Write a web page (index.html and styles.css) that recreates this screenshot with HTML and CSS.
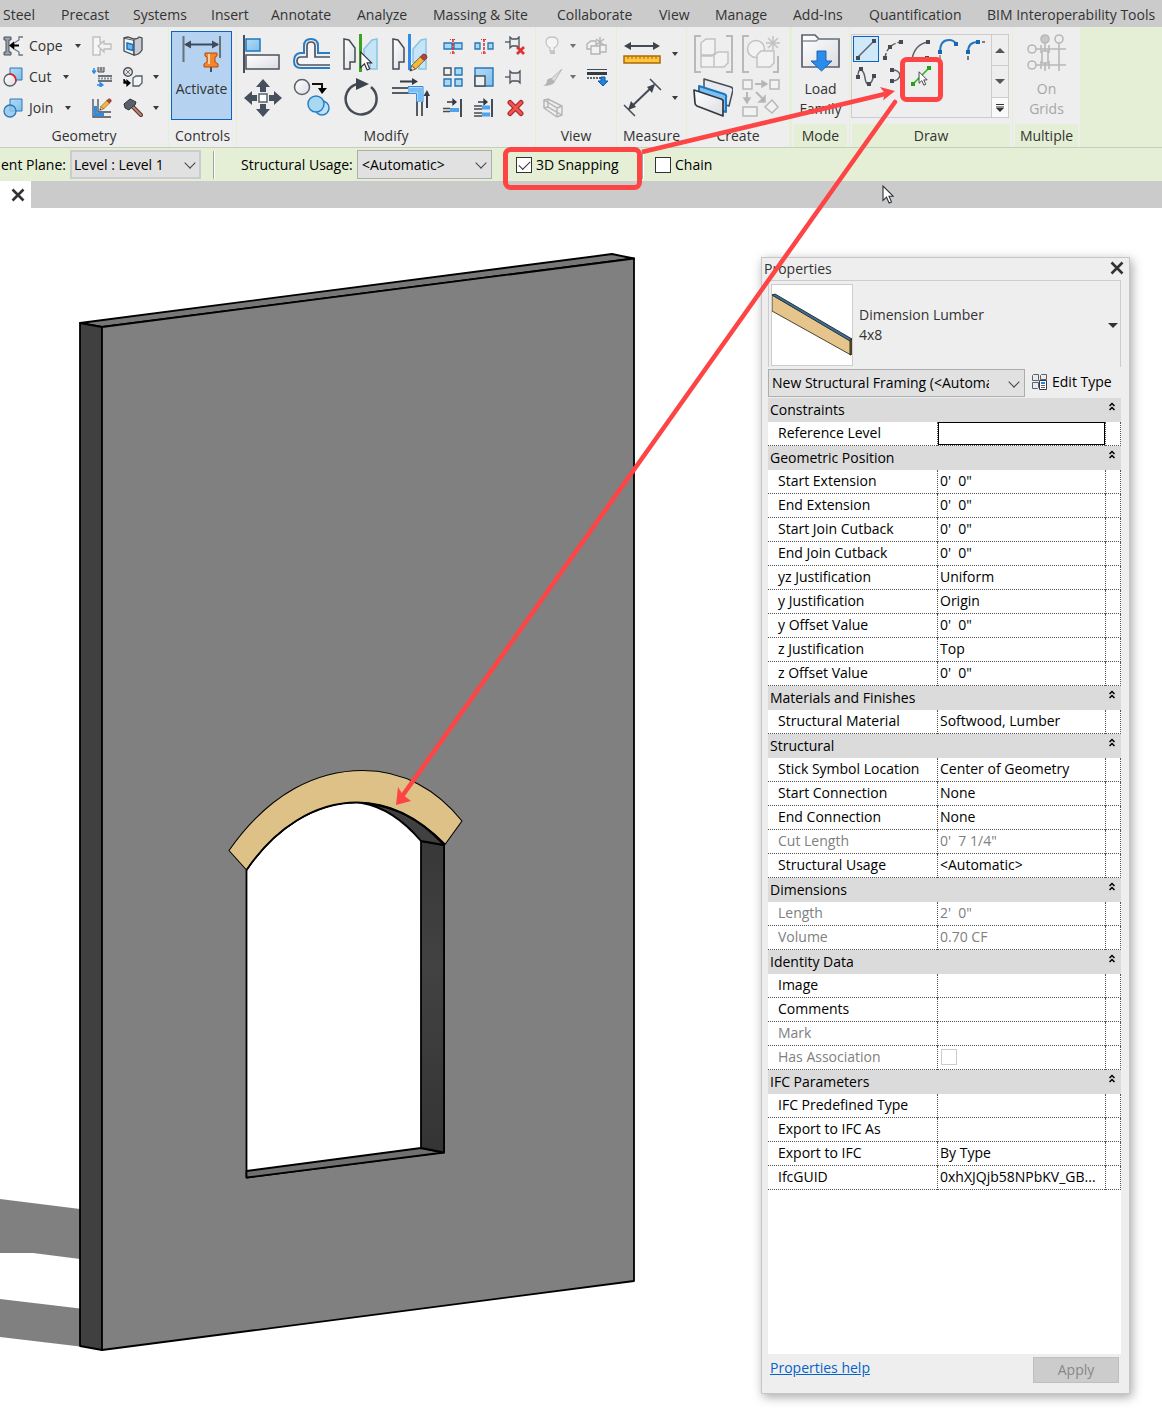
FILE: index.html
```html
<!DOCTYPE html>
<html lang="en">
<head>
<meta charset="utf-8">
<meta name="viewport" content="width=device-width, initial-scale=1">
<title>Modify | Place Beam</title>
<link rel="stylesheet" href="styles.css">
</head>
<body>
<svg class="defs" width="0" height="0" aria-hidden="true">
  <defs>
    <linearGradient id="blue" x1="0" y1="0" x2="1" y2="1"><stop offset="0" stop-color="#b4dcf4"/><stop offset="1" stop-color="#7fbfea"/></linearGradient>
    <linearGradient id="pale" x1="0" y1="0" x2="1" y2="1"><stop offset="0" stop-color="#ffffff"/><stop offset="1" stop-color="#dcdde2"/></linearGradient>
    <linearGradient id="reveal" x1="0" y1="0" x2="0" y2="1"><stop offset="0" stop-color="#383838"/><stop offset=".4" stop-color="#424242"/><stop offset="1" stop-color="#343434"/></linearGradient>
    <symbol id="caret" viewBox="0 0 6 4"><path d="M0 0h6L3 4z" fill="#3c3c3c"/></symbol>
    <symbol id="collapse" viewBox="0 0 8 9"><path d="M1.500 4 4 1.500 6.500 4M1.500 8 4 5.500 6.500 8" fill="none" stroke="#000" stroke-width="1.500"/></symbol>
    <symbol id="cross" viewBox="0 0 14 14"><path d="M1.500 1.500l11 11M12.500 1.500l-11 11" stroke="#333" stroke-width="2.600" fill="none"/></symbol>
    <symbol id="pencil" viewBox="0 0 20 20"><path d="M1 19l2-6 4 4z" fill="#e8d7b8" stroke="#444" stroke-width=".8"/><path d="M3 13 12 4l4 4-9 9z" fill="#f6b836" stroke="#5a4520" stroke-width=".8"/><path d="M12 4l3-3q4 0 4 4l-3 3z" fill="#b9433c" stroke="#603030" stroke-width=".8"/><path d="M1 19l1-2.500 1.500 1.500z" fill="#222"/></symbol>
    <symbol id="pointer" viewBox="0 0 12 19"><path d="M1 1v14.500l3.500-3.300 2.600 5.800 2.400-1.100L7 11.300h4.300z" fill="#fff" stroke="#2e3338" stroke-width="1.100"/></symbol>
  </defs>
</svg>

<nav class="tabs" aria-label="Ribbon tabs">
  <a href="#">Steel</a><a href="#">Precast</a><a href="#">Systems</a><a href="#">Insert</a><a href="#">Annotate</a><a href="#">Analyze</a><a href="#">Massing &amp; Site</a><a href="#">Collaborate</a><a href="#">View</a><a href="#">Manage</a><a href="#">Add-Ins</a><a href="#">Quantification</a><a href="#">BIM Interoperability Tools</a>
</nav>

<div class="ribbon">
  <section class="group geometry">
    <div class="tools">
      <button class="tool"><svg width="20" height="20"><path d="M1 1h7v3H6v12h2v3H1v-3h2V4H1z" fill="#9aa1aa" stroke="#4a515a"/><path d="M20 1h-4v3l-5 3v6l5 3v3h4" fill="#eef0f2" stroke="#6f7680" stroke-width="1.300"/><path d="M16 9.500H8" stroke="#000" stroke-width="2"/><path d="M6 9.500 11 5.500v8z"/></svg><span>Cope</span><svg class="caret" width="6" height="4"><use href="#caret"/></svg></button>
      <button class="tool" aria-label="Cope remove"><svg width="20" height="20"><path d="M1 1h7v5l3 1v6l-3 1v5H1z" fill="#f6f6f6" stroke="#c2c2c2" stroke-width="1.500"/><path d="M6 10l6-5v3h7v5h-7v3z" fill="#f2f2f2" stroke="#bdbdbd" stroke-width="1.300"/></svg></button>
      <button class="tool" aria-label="Wall opening"><svg width="20" height="20"><path d="M1 2l10 2v15L1 15z" fill="#f4f5f7" stroke="#454c56" stroke-width="1.300"/><path d="M1 2l4-1 6 2q4 0 5-2l3 1v12q-3 5-8 5V4" fill="#c9ccd2" stroke="#454c56" stroke-width="1.300"/><path d="M4 7l6 1.500v6L4 13z" fill="#6cb6ee" stroke="#1d6fc0" stroke-width="1.500"/></svg></button>
      <button class="tool"><svg width="20" height="20"><path d="M7 1h12v12H7z" fill="url(#blue)" stroke="#2b78b8"/><circle cx="7" cy="13" r="6" fill="url(#pale)" stroke="#555c66" stroke-width="1.300"/><path d="M6 7q7 0 7 8" fill="none" stroke="#f02020" stroke-width="1.600"/></svg><span>Cut</span><svg class="caret" width="6" height="4"><use href="#caret"/></svg></button>
      <button class="tool" aria-label="Beam joins"><svg width="20" height="20"><path d="M2 1v4M0 3.500 2 6l2-2.500" fill="none" stroke="#2d8cea" stroke-width="1.500"/><path d="M6 0v5h6V0M9 0v4" fill="#bbb" stroke="#444b55"/><path d="M6 9h14M6 14h14" stroke="#444b55" stroke-width="1.500"/><path d="M6 11.500h14" stroke="#8b919b" stroke-width="2" stroke-dasharray="2 1"/><path d="M5 18h5M8 15.500l3 2.500-3 2z" fill="#2d8cea" stroke="#2d8cea" stroke-width="1.300"/></svg></button>
      <button class="tool" aria-label="Paint"><svg width="20" height="20"><circle cx="5" cy="5" r="4.300" fill="#e4e6e9" stroke="#4b525b" stroke-width="1.400"/><path d="M2 2l6 6M8 2 2 8" stroke="#777"/><path d="M1 12v4h4M4 13.500 7 16l-3 2.500z" fill="#000" stroke="#000" stroke-width="1.300"/><path d="M10 11l3-2h6v7l-3 3h-6z" fill="#f3f4f6" stroke="#555c66" stroke-width="1.300"/></svg><svg class="caret far" width="6" height="4"><use href="#caret"/></svg></button>
      <button class="tool"><svg width="20" height="20"><path d="M7 1h12v12H7z" fill="url(#blue)" stroke="#2b78b8"/><circle cx="7" cy="13" r="6" fill="#8cc6ee" fill-opacity=".8" stroke="#2b78b8" stroke-width="1.300"/></svg><span>Join</span><svg class="caret" width="6" height="4"><use href="#caret"/></svg></button>
      <button class="tool" aria-label="Wall joins"><svg width="20" height="20"><path d="M1 1v18h18M6 1v13h13" fill="none" stroke="#454c56" stroke-width="1.300"/><path d="M3.500 8v8.500H12" fill="none" stroke="#2d8cea" stroke-width="3"/><use href="#pencil" x="7" y="0" width="13" height="13"/></svg></button>
      <button class="tool" aria-label="Demolish"><svg width="20" height="20"><path d="M9 8l9 9" stroke="#5f3328" stroke-width="4" stroke-linecap="round"/><path d="M9 8l9 9" stroke="#b98579" stroke-width="2" stroke-linecap="round"/><path d="M1 6l6-5 6 3-1 3-2 1-4 4-4-2z" fill="#5a6069" stroke="#30353b"/></svg><svg class="caret far" width="6" height="4"><use href="#caret"/></svg></button>
    </div>
    <h2>Geometry</h2>
  </section>

  <section class="group controls">
    <div class="tools">
      <button class="activate"><svg width="40" height="40"><path d="M1.500 2v26M38 2v22" stroke="#6a717b" stroke-width="2"/><path d="M4 10.500h32" stroke="#3c4a5c" stroke-width="2"/><path d="M2 10.500l7-4v8zM37 10.500l-7-4v8z" fill="#3c4a5c"/><path d="M29 30v8" stroke="#4b525b" stroke-width="2"/><path d="M23 19h12v3l-2 1v5l3 2v3H22v-3l3-2v-5l-2-1z" fill="#f5862c" stroke="#b34b12"/><path d="M27 20v10" stroke="#ffd0a0" stroke-width="2"/></svg><span>Activate</span></button>
    </div>
    <h2>Controls</h2>
  </section>

  <section class="group modify">
    <div class="tools">
      <div class="large">
        <button aria-label="Align"><svg width="40" height="40"><path d="M1 1v38" stroke="#4a515a" stroke-width="2"/><path d="M3 5h14v12H3z" fill="url(#blue)" stroke="#1e78be" stroke-width="1.500"/><path d="M3 21h33v14H3z" fill="url(#pale)" stroke="#4a515a" stroke-width="1.500"/></svg></button>
        <button aria-label="Offset"><svg width="40" height="40"><path d="M38 19H26V12q0-7-7-7t-7 7v7H8q-6 1-6 8 0 7 7 7h29" fill="none" stroke="#2a7fc4" stroke-width="2"/><path d="M38 23H23V12q0-4-4-4t-4 4v11H9q-4 0-4 4t4 4h29" fill="#f5f5f7" stroke="#4f5660" stroke-width="1.700"/></svg></button>
        <button aria-label="Mirror, pick axis"><svg width="40" height="40"><path d="M3 5l5 1 6 8v14H9v7H3z" fill="url(#pale)" stroke="#454c56" stroke-width="1.500"/><path d="M36 5l-5 1-8 9v13h6v7h7z" fill="#c5e4f5" stroke="#8bc3e4" stroke-width="1.500"/><path d="M19.500 0v38" stroke="#37a31e" stroke-width="3"/><use href="#pointer" x="18" y="17" width="14" height="20"/></svg></button>
        <button aria-label="Mirror, draw axis"><svg width="40" height="40"><path d="M3 5l5 1 6 8v14H9v7H3z" fill="url(#pale)" stroke="#454c56" stroke-width="1.500"/><path d="M36 5l-5 1-8 9v13h6v7h7z" fill="#c5e4f5" stroke="#8bc3e4" stroke-width="1.500"/><path d="M19.500 0v36" stroke="#2d8cea" stroke-width="3"/><use href="#pencil" x="19" y="19" width="19" height="19"/></svg></button>
        <button aria-label="Move"><svg width="40" height="40"><path d="M16 16h8v8h-8z" fill="#fff" stroke="#59616b" stroke-width="1.500"/><path d="M20 1l7 8h-4v5h-6V9h-4zM20 39l-7-8h4v-5h6v5h4zM1 20l8-7v4h5v6H9v4zM39 20l-8 7v-4h-5v-6h5v-4z" fill="#46505c"/></svg></button>
        <button aria-label="Copy"><svg width="40" height="40"><circle cx="10" cy="9" r="7.500" fill="url(#pale)" stroke="#5a616b" stroke-width="1.500"/><path d="M20 6h10v6" fill="none" stroke="#111" stroke-width="2"/><path d="M26 10h9l-5 6z"/><circle cx="30" cy="30" r="7" fill="#bfe2f6" stroke="#2a7fc4" stroke-width="1.500"/><circle cx="24" cy="26" r="8" fill="#a9d8f3" stroke="#2a7fc4" stroke-width="1.500"/></svg></button>
        <button aria-label="Rotate"><svg width="40" height="40"><path d="M30 9a15.500 15.500 0 1 1-14-3" fill="none" stroke="#454c56" stroke-width="2.500"/><path d="M15 0l13 6-13 6z" fill="#3c444e"/></svg></button>
        <button aria-label="Trim to corner"><svg width="40" height="40"><path d="M2 10h17M2 15h17M27 23v15M32 23v15" stroke="#555c66" stroke-width="2"/><path d="M18 8.500h15V24M18 15.500h8.500V24" fill="none" stroke="#2d8cea"/><path d="M18 12h12v12" fill="none" stroke="#79bdf3" stroke-width="5"/><path d="M10 3.500h14M37 30V16" stroke="#333b44" stroke-width="2"/><path d="M22 0l6 3.500L22 7zM33.500 18l3.500-6 3 6z" fill="#333b44"/></svg></button>
      </div>
      <div class="small">
        <button aria-label="Split element"><svg width="20" height="20"><path d="M1 7h8v6H1zM11 7h8v6h-8z" fill="#a9d8f3" stroke="#2477b8" stroke-width="1.300"/><path d="M10 3v15" stroke="#e02424" stroke-width="1.500" stroke-dasharray="3 1"/><path d="M7 3.500h6M7 17h6" stroke="#e02424" stroke-dasharray="1 1"/></svg></button>
        <button aria-label="Split with gap"><svg width="20" height="20"><path d="M1 7h5v6H1zM14 7h5v6h-5z" fill="#a9d8f3" stroke="#2477b8" stroke-width="1.300"/><path d="M10 3v15" stroke="#e02424" stroke-width="1.500" stroke-dasharray="3 1"/><path d="M7 3.500h6M7 17h6" stroke="#e02424" stroke-dasharray="1 1"/></svg></button>
        <button aria-label="Unpin"><svg width="20" height="20"><path d="M0 6h5" stroke="#4b525b" stroke-width="1.300"/><path d="M5 1v11l2-2h5l2 2V1l-2 2H7z" fill="#eceef0" stroke="#4b525b" stroke-width="1.300"/><path d="M12 11l7 7M19 11l-7 7" stroke="#d33" stroke-width="2.800"/></svg></button>
        <button aria-label="Array"><svg width="20" height="20" stroke-width="1.400"><path d="M1 1h7v7H1z" fill="#eef0f2" stroke="#454c56"/><path d="M12 1h7v7h-7zM1 12h7v7H1zM12 12h7v7h-7z" fill="#a9d8f3" stroke="#2477b8"/></svg></button>
        <button aria-label="Scale"><svg width="20" height="20" stroke-width="1.400"><path d="M1 1h18v18H1z" fill="url(#blue)" stroke="#2477b8"/><path d="M1 9h10v10H1z" fill="#eef0f2" stroke="#454c56"/></svg></button>
        <button aria-label="Pin"><svg width="20" height="20" fill="none" stroke="#4b525b" stroke-width="1.300"><path d="M0 10h5"/><path d="M5 4v12l2-2h6l2 2V4l-2 2H7z" fill="#e8eaed"/></svg></button>
        <button aria-label="Extend single"><svg width="20" height="20"><path d="M4 4h8M10 1.500l3 2.500-3 2.500z" fill="#333" stroke="#333b44" stroke-width="1.300"/><path d="M0 10.500h7M0 13.500h7" stroke="#454c56" stroke-width="1.500"/><path d="M7 12h9" stroke="#4ca3ee" stroke-width="4"/><path d="M18 1v18" stroke="#454c56" stroke-width="2"/></svg></button>
        <button aria-label="Extend multiple"><svg width="20" height="20"><path d="M4 4h8M10 1.500l3 2.500-3 2.500z" fill="#333" stroke="#333b44" stroke-width="1.300"/><path d="M0 8h8M0 11h8M0 15h8M0 18h8" stroke="#454c56" stroke-width="1.400"/><path d="M8 9.500h8M8 16.500h8" stroke="#4ca3ee" stroke-width="4"/><path d="M18 1v18" stroke="#454c56" stroke-width="2"/></svg></button>
        <button aria-label="Delete"><svg width="20" height="20"><path d="M5 4.500l11 11M16 4.500l-11 11" stroke="#a82525" stroke-width="5" stroke-linecap="round"/><path d="M5 4.500l11 11M16 4.500l-11 11" stroke="#ef5350" stroke-width="3" stroke-linecap="round"/></svg></button>
      </div>
    </div>
    <h2>Modify</h2>
  </section>

  <section class="group view">
    <div class="tools">
      <button class="tool" aria-label="Hide"><svg width="20" height="20"><path d="M7 15v-3Q3 10 3 6q0-5 6-5t6 5q0 4-4 6v3z" fill="#f4f4f4" stroke="#c4c4c4" stroke-width="1.300"/><path d="M7 15h5v3H7z" fill="#c4c4c4"/></svg><svg class="caret" width="6" height="4"><use href="#caret"/></svg></button>
      <button class="tool" aria-label="Displace"><svg width="22" height="20" fill="#f2f2f2" stroke="#b4b4b4" stroke-width="1.400"><path d="M1 8l4-3h5v8H1z"/><path d="M5 10h9v8H5z"/><path d="M14 9h6v7h-6z"/><path d="M14 1v9M10 3l8 6M18 3l-8 6"/></svg></button>
      <button class="tool" aria-label="Override"><svg width="20" height="20"><path d="M19 2 8 12l3 3z" fill="#ddd" stroke="#b9b9b9"/><path d="M8 11l4 4q-3 4-12 4 4-2 4-6 2-2 4-2z" fill="#b4b4b4"/></svg><svg class="caret" width="6" height="4"><use href="#caret"/></svg></button>
      <button class="tool" aria-label="Linework"><svg width="22" height="20"><path d="M1 2.500h20" stroke="#454c56"/><path d="M1 6.500h20" stroke="#333b44" stroke-width="3"/><path d="M1 11h14" stroke="#333b44" stroke-width="1.500" stroke-dasharray="2 1"/><path d="M15 10h4v4h3l-5 5-5-5h3z" fill="#2383e2" stroke="#1358a4"/></svg></button>
      <button class="tool" aria-label="Selection box"><svg width="20" height="20" fill="#eee" stroke="#b4b4b4" stroke-width="1.400"><path d="M1 2l4-1 14 7v9l-5 2L1 10z"/><path d="M1 2l13 8v9M14 10l5-2M5 1v8l14 8M1 10l4-1" fill="none"/></svg></button>
    </div>
    <h2>View</h2>
  </section>

  <section class="group measure">
    <div class="tools">
      <button class="tool" aria-label="Measure"><svg width="40" height="40"><path d="M5 12h30" stroke="#454c56" stroke-width="2"/><path d="M2 12l7-4v8zM38 12l-7-4v8z" fill="#3c444e"/><path d="M2 22h36v7H2z" fill="#ffc63a" stroke="#a86a12" stroke-width="1.500"/><path d="M6 22v3M10 22v3M14 22v3M18 22v3M22 22v3M26 22v3M30 22v3M34 22v3" stroke="#a86a12"/></svg><svg class="caret" width="6" height="4"><use href="#caret"/></svg></button>
      <button class="tool" aria-label="Aligned dimension"><svg width="40" height="40"><path d="M7 31 32 7" stroke="#454c56" stroke-width="2"/><path d="M2 27l11 11M28 1l11 11" stroke="#454c56" stroke-width="1.500"/><path d="M6 32l3-9 5 6zM33 6l-3 9-5-6z" fill="#3c444e"/></svg><svg class="caret" width="6" height="4"><use href="#caret"/></svg></button>
    </div>
    <h2>Measure</h2>
  </section>

  <section class="group create">
    <div class="tools">
      <button aria-label="Create group"><svg width="40" height="40" fill="#f2f2f2" stroke="#c2c2c2" stroke-width="1.500"><path d="M8 2H2v36h6M33 2h6v36h-6" fill="none" stroke="#b9b9b9" stroke-width="2"/><path d="M8 9l5-4h9v14l-3 3H8zM8 21h13v12H8zM21 21l4-3h10v11l-4 4H21z"/></svg></button>
      <button aria-label="Create similar"><svg width="40" height="40" fill="#f2f2f2" stroke="#c2c2c2" stroke-width="1.500"><path d="M8 2H2v36h6M32 38h5V22" fill="none" stroke="#b9b9b9" stroke-width="2"/><circle cx="15" cy="15" r="8.500"/><path d="M16 21l4-4h13v12l-4 4H16z"/><path d="M32 2v14M25 9h14M27 4l10 10M37 4 27 14"/></svg></button>
      <button aria-label="Create parts"><svg width="40" height="40" stroke-linejoin="round"><path d="M11 1l27 8q2 1 2 3l-4 16-25-8z" fill="#e8eaf0" stroke="#454c56" stroke-width="1.500"/><path d="M6 8l25 8q3 1 2 4v14L6 25z" fill="#7dc0f0" stroke="#1e78be" stroke-width="2"/><path d="M1 12l27 9q3 1 2 4v13L4 28q-2-1-2-3z" fill="url(#pale)" stroke="#323942" stroke-width="1.700"/></svg></button>
      <button aria-label="Create assembly"><svg width="40" height="40" fill="#f2f2f2" stroke="#b8b8b8" stroke-width="1.500"><path d="M2 2h9v9H2zM29 2h9v9h-9zM2 29h14v9H2zM31 22l6 7-6 6-7-6z"/><path d="M14 6h8M6 14v8M15 14l7 7" stroke-width="2"/><path d="M21 3l5 3-5 3zM3 20l3 5 3-5zM24 18v6h-6z" fill="#b0b0b0"/></svg></button>
    </div>
    <h2>Create</h2>
  </section>

  <section class="group mode context">
    <div class="tools">
      <button class="stack"><svg width="40" height="40"><path d="M1 2h13l4 4h20v28H1z" fill="url(#pale)" stroke="#59616b" stroke-width="1.700"/><path d="M2 8h13l3-2h20" fill="none" stroke="#8a919a" stroke-width="1.500"/><path d="M16 18h9v10h6L20.500 38 10 28h6z" fill="#2d8cea" stroke="#1b65b8"/></svg><span>Load</span><span>Family</span></button>
    </div>
    <h2>Mode</h2>
  </section>

  <section class="group draw context">
    <div class="tools">
      <div class="gallery">
        <div class="shapes">
          <button class="selected" aria-label="Line"><svg width="26" height="26"><path d="M5 21 21 5" stroke="#5a616b" stroke-width="1.500"/><path d="M3 20h4v4H3zM19 3h4v4h-4z" fill="#444b54"/></svg></button>
          <button aria-label="Start-end-radius arc"><svg width="26" height="26"><path d="M4 22Q6 8 20 6" fill="none" stroke="#5a616b" stroke-width="1.500" stroke-dasharray="5 2"/><path d="M2 20h4v4H2zM7 9h4v4H7zM18 4h4v4h-4z" fill="#444b54"/></svg></button>
          <button aria-label="Center-ends arc"><svg width="26" height="26"><path d="M3 23Q6 8 19 6" fill="none" stroke="#5a616b" stroke-width="1.500"/><path d="M17 4h4v4h-4zM16 20h4v4h-4z" fill="#444b54"/></svg></button>
          <button aria-label="Tangent arc"><svg width="26" height="26"><path d="M3 16Q3 4 12 4q5 0 7 4" fill="none" stroke="#2477c4" stroke-width="2"/><path d="M1 14h4v4H1zM17 6h4v4h-4z" fill="#1768b4"/><path d="M3 19v4" stroke="#555"/></svg></button>
          <button aria-label="Fillet arc"><svg width="26" height="26"><path d="M3 16Q3 6 13 6" fill="none" stroke="#2477c4" stroke-width="2"/><path d="M1 14h4v4H1zM11 4h4v4h-4z" fill="#1768b4"/><path d="M3 20v4M17 6h3" stroke="#555" stroke-width="1.500"/></svg></button>
          <button aria-label="Spline"><svg width="26" height="26"><path d="M5 13Q5 5 8 6t4 8 4 6 5-9" fill="none" stroke="#5a616b" stroke-width="1.500"/><path d="M3 11h4v4H3zM6 3h4v4H6zM14 18h4v4h-4zM19 10h4v4h-4z" fill="#444b54"/></svg></button>
          <button aria-label="Partial ellipse"><svg width="26" height="26"><path d="M11 6q7 0 8 5-1 6-8 6" fill="none" stroke="#5a616b" stroke-width="1.500"/><path d="M9 4h4v4H9zM9 15h4v4H9z" fill="#444b54"/></svg></button>
          <button aria-label="Pick lines"><svg width="26" height="26"><path d="M4 20 20 4" stroke="#2fb820" stroke-width="1.700"/><path d="M2 18h4v4H2zM18 2h4v4h-4z" fill="#21a413"/><use href="#pointer" x="9" y="7" width="10" height="15"/></svg></button>
        </div>
        <div class="scroller">
          <button aria-label="Up"><svg width="10" height="5"><path d="M0 5h10L5 0z" fill="#555"/></svg></button>
          <button aria-label="Down"><svg width="10" height="5"><path d="M0 0h10L5 5z" fill="#555"/></svg></button>
          <button aria-label="More"><svg width="8" height="8"><path d="M0 .5h8M0 3h8" stroke="#333"/><path d="M0 4h8L4 8z" fill="#333"/></svg></button>
        </div>
      </div>
    </div>
    <h2>Draw</h2>
  </section>

  <section class="group multiple context">
    <div class="tools">
      <button class="stack" disabled><svg width="40" height="40" fill="none" stroke="#b8b8b8" stroke-width="1.600"><circle cx="18" cy="6" r="4" fill="#c8c8c8"/><circle cx="32" cy="6" r="4"/><circle cx="5" cy="16" r="4"/><circle cx="5" cy="32" r="4"/><path d="M18 10v28M32 10v28M9 16h30M9 32h30M14 12v8M22 12v8M14 28v8M22 28v8"/><path d="M15 18h6v12h-6z" fill="#eee"/></svg><span>On</span><span>Grids</span></button>
    </div>
    <h2>Multiple</h2>
  </section>
</div>

<form class="options">
  <label for="plane">ent Plane:</label>
  <span class="pick plane"><select id="plane"><option>Level : Level 1</option></select></span>
  <i class="rule"></i>
  <label for="usage">Structural Usage:</label>
  <span class="pick usage"><select id="usage"><option>&lt;Automatic&gt;</option></select></span>
  <label class="check snap"><input type="checkbox" checked>3D Snapping</label>
  <i class="rule short"></i>
  <label class="check"><input type="checkbox">Chain</label>
</form>

<div class="view-tabs"><button aria-label="Close view"><svg width="14" height="14"><use href="#cross"/></svg></button></div>

<main class="canvas">
  <svg class="scene" width="636" height="1210" viewBox="0 208 636 1210" role="img" aria-label="Wall with arched opening and beam">
    <path d="M0 1199l80 10v50l-47-6H0zM0 1299l80 9.500v38L0 1337z" fill="#808080"/>
    <g stroke="#000" stroke-width="1.800" stroke-linejoin="round">
      <path d="M80 323 612 254l22 4.500L102 327z" fill="#777"/>
      <path d="M80 323l22 4v1023l-22-4z" fill="#404040"/>
      <path d="M102 327 634 258.500V1281L102 1350z" fill="#808080"/>
      <path d="M246.500 870C275 828 315 802 357 802c33 0 63 17 87 42.500V1152l-197.500 25.500z" fill="#fff"/>
      <path d="M246.500 1171 421 1148l23 4.500-197.500 25z" fill="#707070"/>
      <path d="M421 841l23 4v307.500l-23-4.500z" fill="url(#reveal)"/>
      <path d="M362 803c23 4 42 18 59 38l23 4c-24-26-48-39-82-42z" fill="#404040"/>
      <path d="M229 850.500C270 792 318 770.500 363 770.500c40 0 74 19 99 50.500l-17 23.500C420 819 390 802.500 357 802.500c-42 0-82 26-110.500 67.500z" fill="#dec186" stroke-width="1.100"/>
      <path d="M246.500 870C275 828 315 802.500 357 802.500c33 0 63 16.500 88 42" fill="none"/>
    </g>
  </svg>

  <aside class="panel" aria-label="Properties">
    <header><h1>Properties</h1><button aria-label="Close"><svg width="14" height="14"><use href="#cross"/></svg></button></header>
    <button class="type">
      <svg class="thumb" width="80" height="80"><path d="M0 10 79 55v15L0 26z" fill="#e5c58b" stroke="#4f432d"/><path d="M0 10l3-1 77 45-2 2z" fill="#3f6f96" stroke="#26323d"/><path d="M78 55l2-1v15l-2 1z" fill="#6b5838" stroke="#2e281c"/></svg>
      <span>Dimension Lumber<br>4x8</span>
      <svg class="more" width="10" height="5"><path d="M0 0h10L5 5z" fill="#333"/></svg>
    </button>
    <div class="filter">
      <span class="pick"><select aria-label="Instance filter"><option>New Structural Framing (&lt;Automatic&gt;)</option></select></span>
      <button class="edit"><svg width="17" height="17" fill="#e9ebee" stroke="#59616b"><path d="M1.500 2.500l1-1h5v6h-6zM9.500 2.500l1-1h5v5h-6zM1.500 9.500h6v5l-1 1h-5z"/><path d="M8.500 7.500h7v9h-7z" fill="#fff" stroke="#333b44"/><path d="M10 10h4" stroke="#2383e2" stroke-width="2"/><path d="M10 12.500h4M10 14.500h4"/></svg>Edit Type</button>
    </div>
    <div class="grid">
      <table>
        <colgroup><col class="name"><col><col class="extra"></colgroup>
        <tbody>
        <tr class="cat"><th colspan="2">Constraints</th><td><svg width="8" height="9"><use href="#collapse"/></svg></td></tr>
        <tr><th><label for="ref">Reference Level</label></th><td class="field"><input id="ref" type="text"></td><td></td></tr>
        <tr class="cat"><th colspan="2">Geometric Position</th><td><svg width="8" height="9"><use href="#collapse"/></svg></td></tr>
        <tr><th>Start Extension</th><td>0'  0"</td><td></td></tr>
        <tr><th>End Extension</th><td>0'  0"</td><td></td></tr>
        <tr><th>Start Join Cutback</th><td>0'  0"</td><td></td></tr>
        <tr><th>End Join Cutback</th><td>0'  0"</td><td></td></tr>
        <tr><th>yz Justification</th><td>Uniform</td><td></td></tr>
        <tr><th>y Justification</th><td>Origin</td><td></td></tr>
        <tr><th>y Offset Value</th><td>0'  0"</td><td></td></tr>
        <tr><th>z Justification</th><td>Top</td><td></td></tr>
        <tr><th>z Offset Value</th><td>0'  0"</td><td></td></tr>
        <tr class="cat"><th colspan="2">Materials and Finishes</th><td><svg width="8" height="9"><use href="#collapse"/></svg></td></tr>
        <tr><th>Structural Material</th><td>Softwood, Lumber</td><td></td></tr>
        <tr class="cat"><th colspan="2">Structural</th><td><svg width="8" height="9"><use href="#collapse"/></svg></td></tr>
        <tr><th>Stick Symbol Location</th><td>Center of Geometry</td><td></td></tr>
        <tr><th>Start Connection</th><td>None</td><td></td></tr>
        <tr><th>End Connection</th><td>None</td><td></td></tr>
        <tr class="off"><th>Cut Length</th><td>0'  7 1/4"</td><td></td></tr>
        <tr><th>Structural Usage</th><td>&lt;Automatic&gt;</td><td></td></tr>
        <tr class="cat"><th colspan="2">Dimensions</th><td><svg width="8" height="9"><use href="#collapse"/></svg></td></tr>
        <tr class="off"><th>Length</th><td>2'  0"</td><td></td></tr>
        <tr class="off"><th>Volume</th><td>0.70 CF</td><td></td></tr>
        <tr class="cat"><th colspan="2">Identity Data</th><td><svg width="8" height="9"><use href="#collapse"/></svg></td></tr>
        <tr><th>Image</th><td></td><td></td></tr>
        <tr><th>Comments</th><td></td><td></td></tr>
        <tr class="off"><th>Mark</th><td></td><td></td></tr>
        <tr class="off"><th><label for="assoc">Has Association</label></th><td><input id="assoc" type="checkbox" disabled></td><td></td></tr>
        <tr class="cat"><th colspan="2">IFC Parameters</th><td><svg width="8" height="9"><use href="#collapse"/></svg></td></tr>
        <tr><th>IFC Predefined Type</th><td></td><td></td></tr>
        <tr><th>Export to IFC As</th><td></td><td></td></tr>
        <tr><th>Export to IFC</th><td>By Type</td><td></td></tr>
        <tr><th>IfcGUID</th><td>0xhXJQjb58NPbKV_GB...</td><td></td></tr>
        </tbody>
      </table>
    </div>
    <footer><a href="#">Properties help</a><button disabled>Apply</button></footer>
  </aside>
</main>

<svg class="markup" width="1162" height="1418" aria-hidden="true">
  <g fill="none" stroke="#fd4545" stroke-width="5">
    <rect x="505.500" y="149.500" width="134" height="38" rx="5"/>
    <rect x="902.500" y="59.500" width="38" height="40" rx="4"/>
    <path d="M642 152 885 94" stroke-width="4.500"/>
    <path d="M895 102 403 795" stroke-width="4.500" stroke-linecap="round"/>
  </g>
  <path d="M895 91l-15-4 5 6.500-2 7zM396 805l2-18 5 8 8 6z" fill="#fd4545"/>
  <use href="#pointer" x="882" y="185" width="12" height="19"/>
</svg>
</body>
</html>
```
FILE: styles.css
```css
* { box-sizing: border-box; }

body {
  margin: 0;
  min-height: 100vh;
  display: flex;
  flex-direction: column;
  position: relative;
  background: #fff;
  color: #000;
  font: 14px/20px "Open Sans", "Noto Sans", sans-serif;
  overflow-x: hidden;
}

button, select, input { font: inherit; color: inherit; margin: 0; }
button { background: none; border: 0; padding: 0; text-align: left; }
svg { display: block; flex: none; }
.defs { position: absolute; }

/* Ribbon tabs */
.tabs {
  display: grid;
  grid-template-columns: 58px 72px 78px 60px 86px 76px 124px 102px 56px 78px 76px 118px 1fr;
  height: 27px;
  padding: 5px 0 0 3px;
  background: #cbcbcb;
  white-space: nowrap;
}
.tabs a { color: #333; text-decoration: none; }

/* Ribbon */
.ribbon {
  display: flex;
  gap: 1px;
  background: #e4efd5;
  border-bottom: 1px solid #c6cdbd;
  color: #333;
}
.group {
  display: flex;
  flex-direction: column;
  flex: none;
  background: #eee;
}
.group .tools { height: 97px; padding-top: 3px; }
.group h2 {
  height: 23px;
  margin: 0;
  font: inherit;
  line-height: 24px;
  text-align: center;
}
.context h2 { background: #e4efd5; margin: 0 2px; }
.tool { display: flex; align-items: center; }

.geometry { width: 168px; }
.geometry .tools {
  display: grid;
  grid-template: repeat(3, 31px) / 89px 31px 1fr;
  padding-left: 3px;
}
.geometry .tool { gap: 6px; }
.geometry .caret { margin-left: 6px; }
.geometry .caret.far { margin-left: 4px; }

.controls { width: 67px; }
.controls .tools { padding: 4px 4px 0 2px; }
.activate {
  width: 61px;
  height: 89px;
  background: #b5d3f0;
  border: 1px solid #0a64c0;
  display: flex;
  flex-direction: column;
  align-items: center;
  padding-top: 2px;
  gap: 5px;
}

.modify { width: 298px; }
.modify .tools { display: flex; padding-left: 6px; }
.large {
  display: grid;
  grid-template: repeat(2, 44px) / repeat(4, 49px);
  padding-top: 2px;
}
.small {
  display: grid;
  grid-template: repeat(3, 31px) / repeat(3, 31px);
  align-items: center;
  padding-left: 4px;
}

.view { width: 80px; }
.view .tools {
  display: grid;
  grid-template: repeat(3, 31px) / 43px 22px;
  padding-left: 7px;
}
.view .caret { margin-left: 7px; opacity: .7; }

.measure { width: 69px; }
.measure .tools {
  display: grid;
  grid-template-rows: repeat(2, 44px);
  padding: 5px 0 0 5px;
}
.measure .caret { margin-left: 10px; }

.create { width: 102px; }
.create .tools {
  display: grid;
  grid-template: repeat(2, 44px) / repeat(2, 48px);
  padding: 5px 0 0 6px;
}

.mode { width: 57px; margin-left: 2px; }
.stack {
  display: flex;
  flex-direction: column;
  align-items: center;
  width: 100%;
  padding-top: 3px;
}
.stack span { text-align: center; }
.stack svg { margin-bottom: 6px; }
.stack:disabled { color: #a6a6a6; }

.draw { width: 162px; }
.draw .tools { padding: 7px 3px 0 1px; }
.gallery {
  display: flex;
  justify-content: space-between;
  height: 84px;
  border: 1px solid #ccc;
}
.shapes {
  display: grid;
  grid-template: repeat(2, 28px) / 28px 28px 28px 28px 26px;
  padding: 1px 0 0 1px;
}
.shapes button { width: 26px; height: 26px; }
.shapes .selected { background: #cfe8fa; outline: 1px solid #0a64c0; outline-offset: -1px; }
.scroller { display: grid; grid-template-rows: 31px 32px 1fr; width: 17px; }
.scroller button {
  display: grid;
  place-items: center;
  border-left: 1px solid #ccc;
  border-bottom: 1px solid #ccc;
}
.scroller button:last-child { background: #fafafa; border-bottom: 0; }

.multiple { width: 67px; }

/* Options bar */
.options {
  display: flex;
  align-items: center;
  height: 33px;
  padding-left: 1px;
  background: #e4efd5;
}
.options > label { line-height: 22px; padding-top: 1px; }
.options > label[for="plane"] { width: 69px; }
.options > label[for="usage"] { width: 116px; }
.pick { position: relative; display: block; }
.pick select {
  appearance: none;
  display: block;
  width: 100%;
  height: 29px;
  padding: 0 24px 0 4px;
  border: 1px solid #adadad;
  border-radius: 0;
  background: #e1e1e1;
  overflow: hidden;
}
.pick::after {
  content: "";
  position: absolute;
  right: 7px;
  top: 9px;
  width: 7px;
  height: 7px;
  border: solid #444;
  border-width: 0 1px 1px 0;
  transform: rotate(45deg);
}
.plane { width: 131px; }
.plane select { border: 2px solid #cbcbd0; padding-left: 2px; }
.usage { width: 135px; margin-right: 24px; }
.rule {
  width: 2px;
  height: 28px;
  margin: 0 26px 0 12px;
  background: #a5a5a5;
  border-right: 1px solid #fff;
}
.rule.short { margin: 0 11px 0 0; }
.check { display: flex; align-items: center; gap: 4px; }
.snap { width: 126px; }
input[type="checkbox"] {
  appearance: none;
  width: 16px;
  height: 16px;
  border: 1px solid #333;
  background: #fff;
  display: grid;
  place-items: center;
}
input[type="checkbox"]:checked::before {
  content: "";
  width: 10px;
  height: 5px;
  margin-bottom: 3px;
  border: solid #333;
  border-width: 0 0 1px 1px;
  transform: rotate(-45deg);
}
input[type="checkbox"]:disabled { border-color: #ccc; }

/* View tabs */
.view-tabs { height: 27px; background: #cbcbcb; }
.view-tabs button { width: 31px; height: 27px; padding-left: 11px; background: #fff; }

/* Drawing area */
.canvas { flex: 1; display: flex; align-items: flex-start; }

.panel {
  align-self: stretch;
  display: flex;
  flex-direction: column;
  width: 369px;
  margin: 49px 32px 24px auto;
  padding: 0 8px 10px 6px;
  background: #eee;
  border: 1px solid #c6c6c6;
  box-shadow: 2px 3px 10px rgba(0, 0, 0, .35);
}
.panel header {
  display: flex;
  justify-content: space-between;
  align-items: flex-start;
  height: 22px;
  margin: 0 -5px 0 -4px;
  color: #333;
}
.panel h1 { margin: 0; font: inherit; line-height: 22px; }
.panel header button { width: 16px; padding-top: 3px; }

.type {
  display: flex;
  align-items: center;
  height: 87px;
  margin-bottom: 2px;
  padding: 2px 2px 0 3px;
  border: 1px solid #ccc;
  border-bottom: 0;
  color: #333;
}
.type .thumb { width: 80px; height: 80px; background: #fff; outline: 1px solid #ccc; margin-right: 7px; }
.type .more { margin-left: auto; }

.filter { display: flex; height: 28px; gap: 6px; margin-bottom: 1px; }
.filter .pick { width: 257px; }
.filter select { height: 28px; padding: 0 35px 0 3px; }
.edit { display: flex; align-items: center; gap: 4px; padding-bottom: 3px; white-space: nowrap; }

.grid { flex: 1; background: #fff; }
table { width: 100%; border-collapse: separate; border-spacing: 0; table-layout: fixed; }
.name { width: 169px; }
.extra { width: 16px; }
tr { height: 24px; }
th, td {
  height: 24px;
  padding: 0 0 1px 2px;
  border-bottom: 1px dotted #555;
  border-left: 1px dotted #555;
  font-weight: normal;
  line-height: 22px;
  text-align: left;
  white-space: pre;
}
th { padding-left: 10px; border-left: 0; }
td:last-child { border-right: 1px dotted #555; }
.cat th, .cat td, .cat td:last-child { background: #dbdbdb; border: 0; }
.cat th { padding-left: 2px; }
.cat td { padding: 0 0 7px 3px; vertical-align: middle; }
.off { color: #808080; }
.field { padding: 0; }
.field input { display: block; width: 100%; height: 23px; border: 1px solid #000; border-radius: 0; background: #fff; }
td input[type="checkbox"] { margin-left: 1px; }

.panel footer { display: flex; justify-content: space-between; padding: 3px 2px 0; }
.panel footer a { color: #0563c9; line-height: 22px; }
.panel footer button {
  width: 86px;
  height: 26px;
  background: #ccc;
  border: 1px solid #bfbfbf;
  color: #888;
  text-align: center;
}

/* Callouts drawn over the whole window */
.markup { position: absolute; left: 0; top: 0; pointer-events: none; }
```
